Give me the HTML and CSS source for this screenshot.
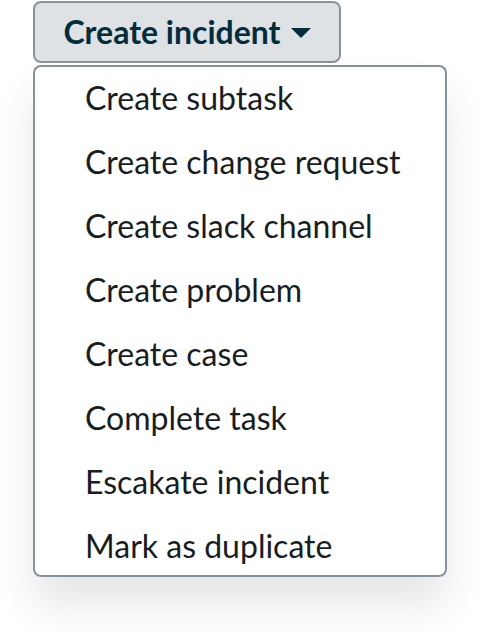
FILE: index.html
```html
<!DOCTYPE html>
<html>
<head>
<meta charset="utf-8">
<link rel="stylesheet" href="styles.css">
</head>
<body>
<div class="dropdown">
  <button class="trigger">Create incident <span class="caret"></span></button>
  <ul class="menu">
    <li class="item">Create subtask</li>
    <li class="item">Create change request</li>
    <li class="item">Create slack channel</li>
    <li class="item">Create problem</li>
    <li class="item">Create case</li>
    <li class="item">Complete task</li>
    <li class="item">Escakate incident</li>
    <li class="item">Mark as duplicate</li>
  </ul>
</div>
</body>
</html>
```
FILE: styles.css
```css
html, body {
  margin: 0;
  padding: 0;
  background: #ffffff;
}
body {
  font-family: Lato, "Liberation Sans", sans-serif;
  padding: 1px 0 0 33px;
  min-height: 634px;
  box-sizing: border-box;
}
.dropdown {
  display: flex;
  flex-direction: column;
  align-items: flex-start;
  gap: 2px;
}
.trigger {
  box-sizing: border-box;
  width: 308px;
  height: 62px;
  border: 2px solid #87929a;
  border-radius: 8px;
  background: #dee2e5;
  color: #032d3c;
  font-family: Lato, "Liberation Sans", sans-serif;
  font-weight: 700;
  font-size: 32px;
  display: flex;
  align-items: center;
  justify-content: center;
  gap: 10px;
  padding: 0 0 2px 0;
}
.caret {
  width: 0;
  height: 0;
  border-left: 10px solid transparent;
  border-right: 10px solid transparent;
  border-top: 10px solid #032d3c;
  margin-top: 3px;
}
.menu {
  box-sizing: border-box;
  width: 414px;
  margin: 0;
  padding: 0;
  list-style: none;
  border-radius: 8px;
  background: #ffffff;
  box-shadow: inset 0 0 0 2px #87929a, 0 28px 40px rgba(0, 0, 0, 0.10);
}
.item {
  height: 64px;
  display: flex;
  align-items: center;
  padding-left: 52px;
  font-size: 32px;
  color: #181d1f;
}
```
